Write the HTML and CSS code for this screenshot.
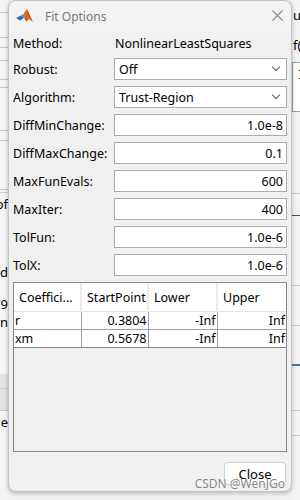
FILE: index.html
```html
<!DOCTYPE html>
<html lang="en">
<head>
    <meta charset="UTF-8">
    <meta name="viewport" content="width=device-width, initial-scale=1.0">
    <title>Fit Options</title>
    <link rel="stylesheet" href="styles.css">
</head>
<body>
    <div class="desktop">
        <div class="behind behind-left">
            <div class="strip" style="height:13px"></div>
            <div class="strip" style="height:25px"></div>
            <div class="strip" style="height:10px"></div>
            <div class="strip" style="height:13px"></div>
            <div class="strip" style="height:19px"></div>
            <div class="strip" style="height:8px"></div>
            <div class="strip" style="height:43px"></div>
            <div class="strip" style="height:10px"></div>
            <div class="strip" style="height:49px"></div>
            <div class="strip" style="height:3px"></div>
            <div class="peek" style="height:68px">of</div>
            <div class="peek" style="height:32px">d</div>
            <div class="peek" style="height:18px">79</div>
            <div class="peek" style="height:63px">n</div>
            <div class="strip shade" style="height:15px"></div>
            <div class="strip shade" style="height:22px"></div>
            <div class="peek" style="height:20px">e</div>
        </div>

        <div class="dialog">
            <div class="titlebar">
                <svg class="app-icon" width="17" height="15" viewBox="0 0 17 15">
                    <path d="M0 9 L5 6.5 L8 9 L4 11.5 Z" fill="#2f6db5"/>
                    <path d="M5 6.5 L7.5 5 L9 8 L8 9 Z" fill="#4a9be0"/>
                    <path d="M7.5 5 L11 0 L14 7 L17 13 L13 10 L9 8 Z" fill="#e2611e"/>
                    <path d="M11 0 L12.5 6 L17 13 L14 7 Z" fill="#b8401a"/>
                    <path d="M9 8 L13 10 L10.5 12.5 L8 9 Z" fill="#c94c1d"/>
                </svg>
                <span class="title">Fit Options</span>
                <svg class="close-x" width="11" height="11" viewBox="0 0 11 11">
                    <path d="M0.5 0.5 L10.5 10.5 M10.5 0.5 L0.5 10.5" stroke="#8a8a8a" stroke-width="1.1"/>
                </svg>
            </div>

            <div class="content">
                <div class="form">
                    <div class="label first">Method:</div>
                    <div class="value first">NonlinearLeastSquares</div>

                    <div class="label">Robust:</div>
                    <div class="field select">Off<span class="chevron"></span></div>

                    <div class="label">Algorithm:</div>
                    <div class="field select">Trust-Region<span class="chevron"></span></div>

                    <div class="label">DiffMinChange:</div>
                    <div class="field num">1.0e-8</div>

                    <div class="label">DiffMaxChange:</div>
                    <div class="field num">0.1</div>

                    <div class="label">MaxFunEvals:</div>
                    <div class="field num">600</div>

                    <div class="label">MaxIter:</div>
                    <div class="field num">400</div>

                    <div class="label">TolFun:</div>
                    <div class="field num">1.0e-6</div>

                    <div class="label">TolX:</div>
                    <div class="field num">1.0e-6</div>
                </div>

                <div class="coeff-box">
                    <table class="coeffs">
                        <colgroup>
                            <col style="width:67px">
                            <col style="width:67px">
                            <col style="width:69px">
                            <col>
                        </colgroup>
                        <thead>
                            <tr>
                                <th>Coeffici...</th>
                                <th>StartPoint</th>
                                <th>Lower</th>
                                <th>Upper</th>
                            </tr>
                        </thead>
                        <tbody>
                            <tr>
                                <td class="name">r</td>
                                <td>0.3804</td>
                                <td>-Inf</td>
                                <td>Inf</td>
                            </tr>
                            <tr>
                                <td class="name">xm</td>
                                <td>0.5678</td>
                                <td>-Inf</td>
                                <td>Inf</td>
                            </tr>
                        </tbody>
                    </table>
                </div>

                <div class="buttons">
                    <button class="btn">Close</button>
                </div>
            </div>
            <div class="watermark">CSDN @WenJGo</div>
        </div>

        <div class="behind behind-right">
            <div class="peek" style="height:30px">ua</div>
            <div class="peek" style="height:32px">f(</div>
            <div class="inner-box">1</div>
            <div class="strip" style="height:82px"></div>
            <div class="strip dark" style="height:22px"></div>
            <div class="strip" style="height:70px"></div>
            <div class="strip" style="height:40px"></div>
            <div class="strip blue" style="height:40px"></div>
            <div class="strip" style="height:45px"></div>
            <div class="strip" style="height:25px"></div>
        </div>
    </div>
</body>
</html>
```

FILE: styles.css
```css
body {
    margin: 0;
    background-color: #f0f0f0;
    font-family: "Noto Sans", "Open Sans", sans-serif;
    font-size: 12px;
    color: #000;
}
.desktop {
    display: flex;
    width: 300px;
    height: 500px;
    overflow: hidden;
    background-color: #f0f0f0;
}

/* windows behind the dialog */
.behind {
    width: 8px;
    flex: none;
    display: flex;
    flex-direction: column;
    overflow: hidden;
    background-color: #f5f5f5;
}
.behind-right {
    background-color: #f3f3f3;
}
.strip {
    flex: none;
    border-bottom: 1px solid #c8c8c8;
    box-sizing: border-box;
}
.strip.shade {
    background-color: #e2e2e2;
}
.strip.dark {
    border-bottom-color: #505050;
}
.strip.blue {
    border-bottom: 2px solid #3b73b9;
}
.peek {
    flex: none;
    font-size: 13px;
    line-height: 16px;
    padding-top: 3px;
    box-sizing: border-box;
    white-space: nowrap;
    direction: rtl;
    overflow: hidden;
}
.behind-right .peek {
    direction: ltr;
    padding-left: 1px;
    padding-top: 7px;
}
.inner-box {
    flex: none;
    height: 50px;
    box-sizing: border-box;
    border: 1px solid #a0a0a0;
    border-right: none;
    background-color: #fff;
    padding: 4px 0 0 4px;
    font-size: 13px;
    font-family: "DejaVu Serif", serif;
}

/* dialog */
.dialog {
    position: relative;
    flex: none;
    width: 284px;
    height: 492px;
    box-sizing: border-box;
    border: 1px solid #c4c4c4;
    border-radius: 8px;
    background-color: #f0f0f0;
    box-shadow: 0 1px 4px rgba(0, 0, 0, 0.25);
    display: flex;
    flex-direction: column;
    overflow: hidden;
}
.titlebar {
    height: 30px;
    flex: none;
    display: flex;
    align-items: center;
    padding: 0 8px 0 7px;
    background-color: #f3f3f3;
}
.app-icon {
    margin-right: 12px;
}
.title {
    flex: 1;
    color: #777;
    font-size: 12px;
}
.close-x {
    margin-bottom: 1px;
}

.content {
    flex: 1;
    display: flex;
    flex-direction: column;
    padding: 1px 4px 6px 4px;
}
.form {
    display: grid;
    grid-template-columns: 101px 1fr;
    grid-template-rows: 20px;
    grid-auto-rows: 22px;
    row-gap: 6px;
}
.label {
    display: flex;
    align-items: center;
    white-space: nowrap;
    font-size: 12.5px;
}
.value {
    display: flex;
    align-items: center;
    padding-left: 1px;
    font-size: 12.5px;
}
.label.first, .value.first {
    padding-top: 3px;
}
.field {
    display: flex;
    align-items: center;
    box-sizing: border-box;
    border: 1px solid #acacac;
    background-color: #fff;
    font-size: 12.5px;
}
.select {
    padding-left: 4px;
    justify-content: space-between;
    padding-right: 7px;
}
.chevron {
    width: 5px;
    height: 5px;
    border-right: 1px solid #555;
    border-bottom: 1px solid #555;
    transform: rotate(45deg);
    margin-top: -4px;
}
.num {
    justify-content: flex-end;
    padding-right: 3px;
}

/* coefficients table */
.coeff-box {
    margin-top: 6px;
    height: 170px;
    box-sizing: border-box;
    border: 1px solid #828790;
    background-color: #f0f0f0;
}
.coeffs {
    width: 100%;
    border-collapse: collapse;
    table-layout: fixed;
    font-size: 12.5px;
}
.coeffs th {
    height: 28px;
    background-color: #fff;
    font-weight: normal;
    text-align: left;
    padding: 0 0 0 5px;
    border-right: 2px solid #ececec;
    border-bottom: 1px solid #e6e6e6;
    white-space: nowrap;
    overflow: hidden;
}
.coeffs th:last-child {
    border-right: none;
}
.coeffs td {
    height: 17px;
    background-color: #fff;
    text-align: right;
    padding: 0 1px 0 0;
    border: 1px solid #a0a0a0;
    line-height: 16px;
}
.coeffs td:first-child {
    border-left: none;
}
.coeffs td:last-child {
    border-right: none;
}
.coeffs tbody tr:last-child td {
    border-bottom: 1px solid #808080;
}
.coeffs td.name {
    text-align: left;
    padding-left: 1px;
}

.buttons {
    margin-top: auto;
    display: flex;
    justify-content: flex-end;
}
.btn {
    width: 62px;
    height: 23px;
    font-family: inherit;
    font-size: 13px;
    background-color: #fdfdfd;
    border: 1px solid #d0d0d0;
    border-radius: 4px;
    margin-right: 1px;
}
.watermark {
    position: absolute;
    right: 6px;
    bottom: 1px;
    font-size: 12px;
    line-height: 13px;
    color: rgba(110, 110, 110, 0.85);
    text-shadow: 0 0 2px #fff, 0 0 1px #fff;
}
```
